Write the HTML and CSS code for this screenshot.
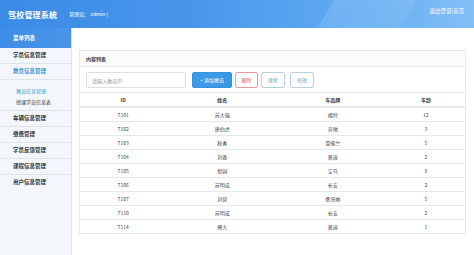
FILE: index.html
```html
<!DOCTYPE html>
<html lang="zh">
<head>
<meta charset="utf-8">
<title>驾校管理系统</title>
<link rel="stylesheet" href="styles.css">
</head>
<body>
<div class="header">
  <div class="title">驾校管理系统</div>
  <div class="user">管理员： admin |</div>
  <div class="links">退出登录|首页</div>
</div>
<div class="layout">
  <div class="sidebar">
    <div class="menu-title">菜单列表</div>
    <div class="item">学员信息管理</div>
    <div class="item active">教员信息管理</div>
    <div class="sub">
      <div class="sub-item active">教员信息管理</div>
      <div class="sub-item">授课学员信息表</div>
    </div>
    <div class="item">车辆信息管理</div>
    <div class="item">缴费管理</div>
    <div class="item">学员反馈管理</div>
    <div class="item">课程信息管理</div>
    <div class="item last">用户信息管理</div>
  </div>
  <div class="main">
    <div class="panel">
      <div class="panel-head">内容列表</div>
      <div class="toolbar">
        <div class="input">请输入教员ID</div>
        <div class="btn btn-primary">+ 添加教员</div>
        <div class="btn btn-danger">删除</div>
        <div class="btn btn-default">搜索</div>
        <div class="btn btn-default btn-gap">修改</div>
      </div>
      <table class="grid">
        <colgroup><col class="c1"><col class="c2"><col class="c3"><col class="c4"></colgroup>
        <thead><tr><th>ID</th><th>姓名</th><th>车品牌</th><th>车龄</th></tr></thead>
        <tbody>
          <tr><td>T101</td><td>苏大强</td><td>福特</td><td>12</td></tr>
          <tr><td>T102</td><td>唐伯虎</td><td>奔驰</td><td>3</td></tr>
          <tr><td>T103</td><td>秋香</td><td>雪佛兰</td><td>5</td></tr>
          <tr><td>T104</td><td>刘备</td><td>奥迪</td><td>2</td></tr>
          <tr><td>T105</td><td>梨园</td><td>宝马</td><td>8</td></tr>
          <tr><td>T106</td><td>苏明成</td><td>长安</td><td>2</td></tr>
          <tr><td>T107</td><td>刘营</td><td>桑塔纳</td><td>5</td></tr>
          <tr><td>T110</td><td>苏明成</td><td>长安</td><td>2</td></tr>
          <tr><td>T114</td><td>熊大</td><td>奥迪</td><td>1</td></tr>
        </tbody>
      </table>
    </div>
  </div>
</div>
</body>
</html>
```
FILE: styles.css
```css
html, body {
  margin: 0;
  padding: 0;
  height: 100%;
  background: #ffffff;
  font-family: "Noto Sans CJK SC", "Noto Sans", sans-serif;
  color: #333;
}
.header {
  height: 28px;
  display: flex;
  align-items: center;
  padding: 0 10px 0 8px;
  color: #fff;
  background:
    linear-gradient(120deg, rgba(255,255,255,0) 68%, rgba(255,255,255,0.12) 68.3%, rgba(255,255,255,0.06) 85%, rgba(255,255,255,0) 85.2%),
    linear-gradient(90deg, #3a8be5 0%, #4896ec 40%, #5ea8f2 70%, #82bff6 100%);
}
.title {
  font-size: 8px;
  font-weight: bold;
  letter-spacing: 0.2px;
}
.user {
  font-size: 5px;
  margin-left: 12px;
  margin-top: -1px;
}
.links {
  font-size: 5.5px;
  margin-left: auto;
  margin-top: -6px;
}
.layout {
  display: flex;
  height: 227px;
}
.sidebar {
  width: 72px;
  flex: none;
  background: #f3f7fc;
  border-right: 1px solid #dde3ea;
  box-sizing: border-box;
}
.menu-title {
  height: 20px;
  line-height: 20px;
  padding-left: 13px;
  font-size: 5.5px;
  font-weight: bold;
  color: #fff;
  background: linear-gradient(90deg, #3d8ce6, #4a95ea);
}
.item {
  height: 16px;
  line-height: 15px;
  padding-left: 13px;
  font-size: 5.5px;
  font-weight: bold;
  color: #333;
  border-bottom: 1px solid #dfe4ea;
  box-sizing: border-box;
}
.item.last { border-bottom: none; }
.item.active { color: #3f93d8; }
.sub {
  height: 31px;
  padding-top: 5px;
  box-sizing: border-box;
  border-bottom: 1px solid #dfe4ea;
}
.sub-item {
  height: 11px;
  line-height: 11px;
  padding-left: 16px;
  font-size: 5px;
  color: #333;
}
.sub-item.active { color: #3a9ad0; }
.main {
  flex: 1;
  padding: 22px 8px 0 7px;
}
.panel {
  border: 1px solid #e6e9ee;
  border-bottom: none;
  background: #fff;
}
.panel-head {
  height: 15px;
  line-height: 15px;
  padding-left: 6px;
  font-size: 5px;
  font-weight: bold;
  background: #fbfbfb;
  border-bottom: 1px solid #e6e9ee;
}
.toolbar {
  display: flex;
  align-items: center;
  height: 25px;
  padding-left: 6px;
}
.input {
  width: 100px;
  height: 16px;
  line-height: 15px;
  box-sizing: border-box;
  border: 1px solid #dcdfe4;
  border-radius: 2px;
  padding-left: 5px;
  font-size: 5px;
  color: #999;
}
.btn {
  height: 16px;
  line-height: 14px;
  box-sizing: border-box;
  border-radius: 2px;
  font-size: 5px;
  text-align: center;
  margin-left: 3px;
}
.btn-primary {
  width: 40px;
  margin-left: 6px;
  background: #3b9ae6;
  border: 1px solid #3592de;
  color: #fff;
}
.btn-danger {
  width: 23px;
  border: 1px solid #e39a9e;
  color: #d9534f;
}
.btn-default {
  width: 24px;
  border: 1px solid #b9cedd;
  color: #5d9fc9;
}
.btn-gap { margin-left: 5px; }
.grid {
  width: 100%;
  border-collapse: collapse;
  table-layout: fixed;
  font-size: 5px;
}
.c1 { width: 86px; }
.c2 { width: 112px; }
.c3 { width: 108px; }
.c4 { width: 78px; }
.grid th {
  height: 13px;
  font-weight: bold;
  color: #333;
  border-top: 1px solid #e3e6ea;
  border-bottom: 2px solid #e3e6ea;
  padding: 0;
}
.grid td {
  height: 13px;
  padding: 0;
  text-align: center;
  color: #444;
  border-bottom: 1px solid #e6e9ec;
}
```
